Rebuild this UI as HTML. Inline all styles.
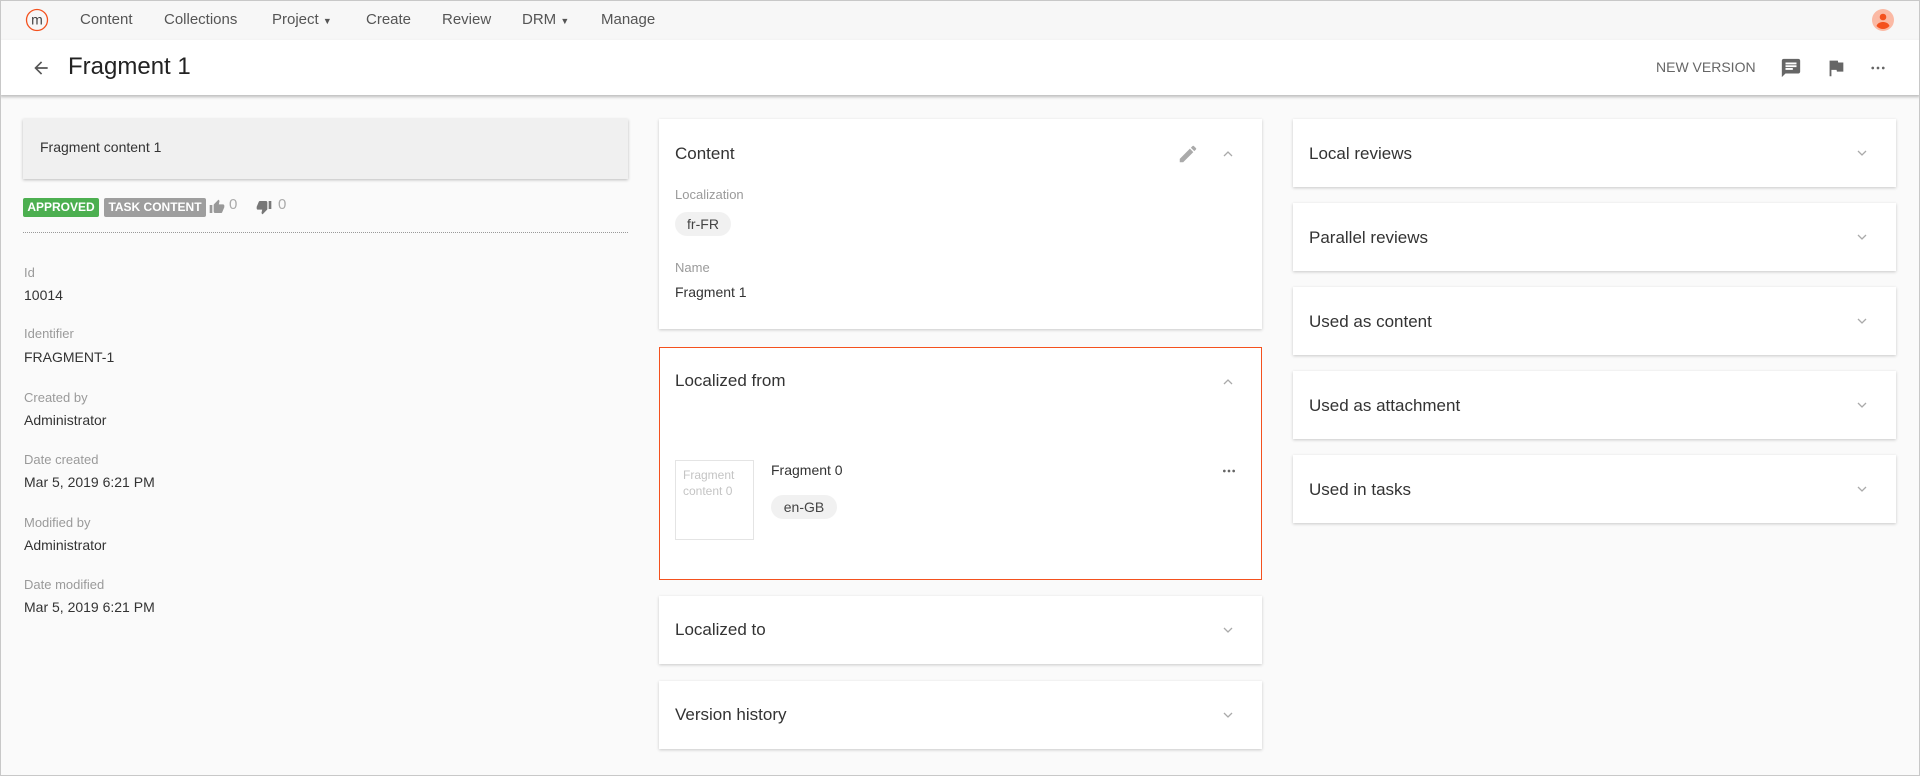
<!DOCTYPE html>
<html><head><meta charset="utf-8"><style>
*{box-sizing:border-box;margin:0;padding:0}
body{width:1920px;height:776px;overflow:hidden;background:#fafafa;font-family:"Liberation Sans",sans-serif;color:#333;position:relative}
.frame{position:absolute;left:0;top:0;width:1920px;height:776px;border:1px solid #c8c8c8;pointer-events:none;z-index:9}
.a{position:absolute}
.nav{left:0;top:0;width:1920px;height:40px;background:#f7f7f7}
.nav span{position:absolute;top:11px;font-size:15px;color:#555}
.hdr{left:0;top:40px;width:1920px;height:55px;background:#fff;box-shadow:0 2px 3px rgba(0,0,0,.25)}
.card{position:absolute;background:#fff;box-shadow:0 1px 3px rgba(0,0,0,.2)}
.ct{position:absolute;left:16px;font-size:17px;color:#333}
.lbl{position:absolute;font-size:13px;color:#9a9a9a}
.val{position:absolute;font-size:14px;color:#333}
.chip{position:absolute;background:#f1f1f1;border-radius:12px;font-size:14px;color:#444;text-align:center;line-height:24px}
.chev{position:absolute}
</style></head><body>
<div class="frame"></div>
<div class="a nav">
<svg class="a" style="left:25px;top:8px" width="24" height="24" viewBox="0 0 24 24"><circle cx="12" cy="12" r="10.5" fill="none" stroke="#f4511e" stroke-width="1.3"/><text x="12" y="16.5" font-size="14" text-anchor="middle" fill="#444" font-family="Liberation Sans">m</text></svg>
<span style="left:80px">Content</span>
<span style="left:164px">Collections</span>
<span style="left:272px">Project <small style="font-size:9px">▼</small></span>
<span style="left:366px">Create</span>
<span style="left:442px">Review</span>
<span style="left:522px">DRM <small style="font-size:9px">▼</small></span>
<span style="left:601px">Manage</span>
<svg class="a" style="left:1872px;top:9px" width="22" height="22" viewBox="0 0 22 22"><circle cx="11" cy="11" r="11" fill="#fbb9a4"/><circle cx="11" cy="8" r="3.3" fill="#f4511e"/><path d="M4.5 17c1-3 4-4 6.5-4s5.5 1 6.5 4c-2 2-4 3-6.5 3s-4.5-1-6.5-3z" fill="#f4511e"/></svg>
</div>
<div class="a hdr">
<svg class="a" style="left:31px;top:18px" width="20" height="20" viewBox="0 0 24 24"><path d="M20 11H7.8l5.6-5.6L12 4l-8 8 8 8 1.4-1.4L7.8 13H20z" fill="#555"/></svg>
<div class="a" style="left:68px;top:13px;font-size:24px;color:#222">Fragment 1</div>
<div class="a" style="left:1656px;top:19px;font-size:14px;color:#666">NEW VERSION</div>
<svg class="a" style="left:1780px;top:17px" width="22" height="22" viewBox="0 0 24 24"><path d="M20 2H4c-1.1 0-2 .9-2 2v18l4-4h14c1.1 0 2-.9 2-2V4c0-1.1-.9-2-2-2zM6 9h12v2H6zm8 5H6v-2h8zm4-6H6V6h12z" fill="#666"/></svg>
<svg class="a" style="left:1825px;top:17px" width="22" height="22" viewBox="0 0 24 24"><path d="M14.4 6L14 4H5v17h2v-7h5.6l.4 2h7V6z" fill="#666"/></svg>
<svg class="a" style="left:1869px;top:19px" width="18" height="18" viewBox="0 0 24 24"><circle cx="5" cy="12" r="1.8" fill="#666"/><circle cx="12" cy="12" r="1.8" fill="#666"/><circle cx="19" cy="12" r="1.8" fill="#666"/></svg>
</div>

<!-- left -->
<div class="a" style="left:23px;top:119px;width:605px;height:60px;background:#f0f0f0;box-shadow:0 1px 3px rgba(0,0,0,.25)"><div class="a" style="left:17px;top:20px;font-size:14px;color:#333">Fragment content 1</div></div>
<div class="a" style="left:23px;top:198px;width:76px;height:19px;background:#4caf50;color:#fff;font-size:12px;font-weight:bold;line-height:19px;text-align:center;border-radius:2px">APPROVED</div>
<div class="a" style="left:104px;top:198px;width:102px;height:19px;background:#9e9e9e;color:#fff;font-size:12px;font-weight:bold;line-height:19px;text-align:center;border-radius:2px">TASK CONTENT</div>
<svg class="a" style="left:209px;top:199px" width="16" height="16" viewBox="0 0 24 24"><path d="M1 21h4V9H1v12zm22-11c0-1.1-.9-2-2-2h-6.3l1-4.6v-.3c0-.4-.2-.8-.4-1.1L14.2 1 7.6 7.6C7.2 7.9 7 8.4 7 9v10c0 1.1.9 2 2 2h9c.8 0 1.5-.5 1.8-1.2l3-7.1c.1-.2.2-.5.2-.7v-2z" fill="#999"/></svg>
<div class="a" style="left:229px;top:196px;font-size:15px;color:#aaa">0</div>
<svg class="a" style="left:256px;top:199px" width="16" height="16" viewBox="0 0 24 24"><path d="M15 3H6c-.8 0-1.5.5-1.8 1.2l-3 7.1c-.1.2-.2.5-.2.7v2c0 1.1.9 2 2 2h6.3l-1 4.6v.3c0 .4.2.8.4 1.1L9.8 23l6.6-6.6c.4-.4.6-.9.6-1.4V5c0-1.1-.9-2-2-2zm4 0v12h4V3h-4z" fill="#777"/></svg>
<div class="a" style="left:278px;top:196px;font-size:15px;color:#aaa">0</div>
<div class="a" style="left:23px;top:232px;width:605px;border-top:1px dotted #999"></div>
<div class="lbl" style="left:24px;top:265px">Id</div><div class="val" style="left:24px;top:287px">10014</div>
<div class="lbl" style="left:24px;top:326px">Identifier</div><div class="val" style="left:24px;top:349px">FRAGMENT-1</div>
<div class="lbl" style="left:24px;top:390px">Created by</div><div class="val" style="left:24px;top:412px">Administrator</div>
<div class="lbl" style="left:24px;top:452px">Date created</div><div class="val" style="left:24px;top:474px">Mar 5, 2019 6:21 PM</div>
<div class="lbl" style="left:24px;top:515px">Modified by</div><div class="val" style="left:24px;top:537px">Administrator</div>
<div class="lbl" style="left:24px;top:577px">Date modified</div><div class="val" style="left:24px;top:599px">Mar 5, 2019 6:21 PM</div>

<!-- middle -->
<div class="card" style="left:659px;top:119px;width:603px;height:210px">
<div class="ct" style="top:25px">Content</div>
<svg class="a" style="left:518px;top:24px" width="22" height="22" viewBox="0 0 24 24"><path d="M3 17.25V21h3.75L17.8 9.94l-3.75-3.75zM20.7 7.04a1 1 0 0 0 0-1.41l-2.34-2.34a1 1 0 0 0-1.41 0l-1.83 1.83 3.75 3.75z" fill="#aaa"/></svg>
<svg class="chev" style="left:562px;top:28px" width="14" height="14" viewBox="0 0 14 14"><path d="M3 9l4-4 4 4" fill="none" stroke="#aaa" stroke-width="1.3"/></svg>
<div class="lbl" style="left:16px;top:68px">Localization</div>
<div class="chip" style="left:16px;top:93px;width:56px">fr-FR</div>
<div class="lbl" style="left:16px;top:141px">Name</div>
<div class="val" style="left:16px;top:165px">Fragment 1</div>
</div>
<div class="card" style="left:659px;top:347px;width:603px;height:233px;border:1px solid #f4511e;box-shadow:none">
<div class="ct" style="left:15px;top:23px">Localized from</div>
<svg class="chev" style="left:561px;top:27px" width="14" height="14" viewBox="0 0 14 14"><path d="M3 9l4-4 4 4" fill="none" stroke="#aaa" stroke-width="1.3"/></svg>
<div class="a" style="left:15px;top:112px;width:79px;height:80px;border:1px solid #e4e4e4;padding:6px 7px;font-size:12px;color:#c4c4c4;line-height:16px">Fragment content 0</div>
<div class="val" style="left:111px;top:114px">Fragment 0</div>
<div class="chip" style="left:111px;top:147px;width:66px">en-GB</div>
<svg class="a" style="left:561px;top:115px" width="16" height="16" viewBox="0 0 24 24"><circle cx="5" cy="12" r="2" fill="#666"/><circle cx="12" cy="12" r="2" fill="#666"/><circle cx="19" cy="12" r="2" fill="#666"/></svg>
</div>
<div class="card" style="left:659px;top:596px;width:603px;height:68px"><div class="ct" style="top:24px">Localized to</div><svg class="chev" style="left:562px;top:27px" width="14" height="14" viewBox="0 0 14 14"><path d="M3 5l4 4 4-4" fill="none" stroke="#aaa" stroke-width="1.3"/></svg></div>
<div class="card" style="left:659px;top:681px;width:603px;height:68px"><div class="ct" style="top:24px">Version history</div><svg class="chev" style="left:562px;top:27px" width="14" height="14" viewBox="0 0 14 14"><path d="M3 5l4 4 4-4" fill="none" stroke="#aaa" stroke-width="1.3"/></svg></div>

<!-- right -->
<div class="card" style="left:1293px;top:119px;width:603px;height:68px"><div class="ct" style="top:25px">Local reviews</div><svg class="chev" style="left:562px;top:27px" width="14" height="14" viewBox="0 0 14 14"><path d="M3 5l4 4 4-4" fill="none" stroke="#aaa" stroke-width="1.3"/></svg></div>
<div class="card" style="left:1293px;top:203px;width:603px;height:68px"><div class="ct" style="top:25px">Parallel reviews</div><svg class="chev" style="left:562px;top:27px" width="14" height="14" viewBox="0 0 14 14"><path d="M3 5l4 4 4-4" fill="none" stroke="#aaa" stroke-width="1.3"/></svg></div>
<div class="card" style="left:1293px;top:287px;width:603px;height:68px"><div class="ct" style="top:25px">Used as content</div><svg class="chev" style="left:562px;top:27px" width="14" height="14" viewBox="0 0 14 14"><path d="M3 5l4 4 4-4" fill="none" stroke="#aaa" stroke-width="1.3"/></svg></div>
<div class="card" style="left:1293px;top:371px;width:603px;height:68px"><div class="ct" style="top:25px">Used as attachment</div><svg class="chev" style="left:562px;top:27px" width="14" height="14" viewBox="0 0 14 14"><path d="M3 5l4 4 4-4" fill="none" stroke="#aaa" stroke-width="1.3"/></svg></div>
<div class="card" style="left:1293px;top:455px;width:603px;height:68px"><div class="ct" style="top:25px">Used in tasks</div><svg class="chev" style="left:562px;top:27px" width="14" height="14" viewBox="0 0 14 14"><path d="M3 5l4 4 4-4" fill="none" stroke="#aaa" stroke-width="1.3"/></svg></div>
</body></html>
